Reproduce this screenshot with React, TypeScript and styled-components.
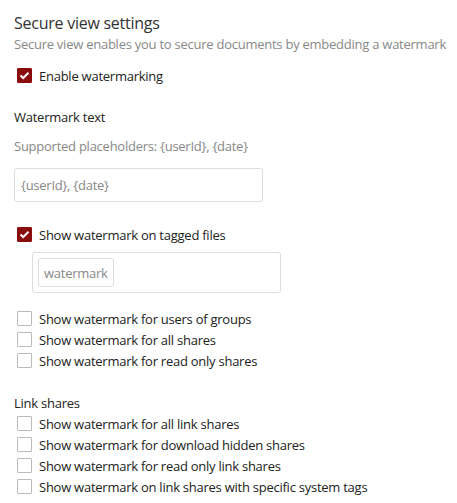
import React from "react";
import styled, { createGlobalStyle } from "styled-components";

const GlobalStyle = createGlobalStyle`
  body {
    margin: 0;
    background: #fff;
    font-family: "Open Sans", "Noto Sans", sans-serif;
    color: #222;
  }
`;

const Section = styled.div`
  padding: 13px 0 0 14px;
  display: flex;
  flex-direction: column;
  letter-spacing: -0.25px;
`;

const Title = styled.h2`
  margin: 0;
  font-size: 16px;
  font-weight: 400;
  line-height: 20px;
  color: #333;
`;

const Hint = styled.p<{ $mt?: number }>`
  margin: ${({ $mt }) => $mt ?? 0}px 0 0 0;
  font-size: 13px;
  line-height: 18px;
  color: #888;
  white-space: nowrap;
`;

const Label = styled.div<{ $mt?: number }>`
  margin-top: ${({ $mt }) => $mt ?? 0}px;
  font-size: 13px;
  line-height: 20px;
  color: #222;
`;

const Row = styled.label<{ $mt?: number }>`
  margin-top: ${({ $mt }) => $mt ?? 0}px;
  display: flex;
  align-items: center;
  height: 21px;
  padding-left: 3px;
  font-size: 13px;
  color: #222;
  white-space: nowrap;
  cursor: pointer;
`;

const Box = styled.span<{ $checked?: boolean }>`
  width: 15px;
  height: 15px;
  box-sizing: border-box;
  margin-right: 7px;
  border-radius: 1px;
  border: 1px solid ${({ $checked }) => ($checked ? "#8b0c0c" : "#bbb")};
  background: ${({ $checked }) => ($checked ? "#8b0c0c" : "#fff")};
  display: flex;
  align-items: center;
  justify-content: center;
`;

const TextInput = styled.input`
  margin-top: 13px;
  width: 249px;
  height: 34px;
  box-sizing: border-box;
  border: 1px solid #ddd;
  border-radius: 3px;
  padding: 0 6px;
  font-family: inherit;
  font-size: 13px;
  letter-spacing: -0.25px;
  color: #222;
  &::placeholder {
    color: #888;
  }
`;

const TagBox = styled.div`
  margin: 7px 0 0 18px;
  width: 249px;
  height: 41px;
  box-sizing: border-box;
  border: 1px solid #ddd;
  border-radius: 3px;
  padding: 5px;
  display: flex;
`;

const Tag = styled.span`
  display: flex;
  align-items: center;
  box-sizing: border-box;
  height: 29px;
  padding: 0 5px;
  border: 1px solid #ddd;
  border-radius: 3px;
  font-size: 13px;
  color: #888;
`;

const Check = () => (
  <svg width="11" height="9" viewBox="0 0 11 9">
    <path d="M1.5 4.5 L4.2 7 L9.5 1.8" fill="none" stroke="#fff" strokeWidth="2" />
  </svg>
);

const CheckRow = ({ label, checked, mt }: { label: string; checked?: boolean; mt?: number }) => (
  <Row $mt={mt}>
    <Box $checked={checked}>{checked && <Check />}</Box>
    {label}
  </Row>
);

export default function App() {
  return (
    <>
      <GlobalStyle />
      <Section>
        <Title>Secure view settings</Title>
        <Hint $mt={2}>Secure view enables you to secure documents by embedding a watermark</Hint>
        <CheckRow mt={12} checked label="Enable watermarking" />
        <Label $mt={21}>Watermark text</Label>
        <Hint $mt={10}>Supported placeholders: {"{userId}"}, {"{date}"}</Hint>
        <TextInput placeholder="{userId}, {date}" />
        <CheckRow mt={22} checked label="Show watermark on tagged files" />
        <TagBox>
          <Tag>watermark</Tag>
        </TagBox>
        <CheckRow mt={15} label="Show watermark for users of groups" />
        <CheckRow label="Show watermark for all shares" />
        <CheckRow label="Show watermark for read only shares" />
        <Label $mt={22}>Link shares</Label>
        <CheckRow label="Show watermark for all link shares" />
        <CheckRow label="Show watermark for download hidden shares" />
        <CheckRow label="Show watermark for read only link shares" />
        <CheckRow label="Show watermark on link shares with specific system tags" />
      </Section>
    </>
  );
}
